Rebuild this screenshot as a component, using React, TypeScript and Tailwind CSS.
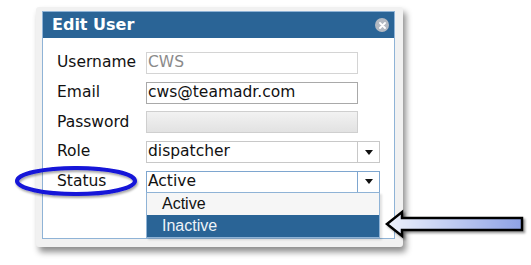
import React from 'react'

const font = { fontFamily: '"DejaVu Sans", Verdana, sans-serif' }

function Caret({ border }: { border: string }) {
  return (
    <div className={`flex h-full w-[22px] items-center justify-center border-l ${border}`}>
      <svg width="8" height="5" viewBox="0 0 8 5">
        <path d="M0 0 L8 0 L4 5 Z" fill="#111" />
      </svg>
    </div>
  )
}

export default function App() {
  const rows = ['Username', 'Email', 'Password', 'Role', 'Status']

  return (
    <div className="relative h-[265px] w-[531px] overflow-hidden bg-white" style={font}>
      {/* window frame */}
      <div className="ml-[36px] mt-[7px] w-[367px] rounded-[3px] bg-[#f1f1f1] pb-[8px] pl-[6px] pr-[8px] pt-[4px] shadow-[3px_5px_6px_rgba(0,0,0,0.45)]">
        <div className="border border-[#8fb3d6] bg-white">
          {/* header */}
          <div className="flex h-[26px] items-center justify-between bg-[#2a6496] pl-[9px] pr-[5px]">
            <span className="text-[16px] font-bold leading-none text-white">Edit User</span>
            <div className="flex h-[14px] w-[14px] items-center justify-center rounded-full bg-[#b3b9c2]">
              <svg width="7" height="7" viewBox="0 0 7 7">
                <path d="M1 1 L6 6 M6 1 L1 6" stroke="white" strokeWidth="1.8" strokeLinecap="round" />
              </svg>
            </div>
          </div>

          {/* form */}
          <div className="flex pb-[45px] pl-[14px] pt-[14px]">
            <div className="flex w-[89px] flex-col gap-[7.7px]">
              {rows.map((r) => (
                <div key={r} className="flex h-[22px] items-center text-[15.5px] leading-none text-[#111]">
                  {r}
                </div>
              ))}
            </div>
            <div className="flex flex-col gap-[7.7px]">
              <div className="flex h-[22px] w-[212px] items-center border border-[#d4d4d4] px-[1px] text-[15.5px] leading-none text-[#8a8a8a]">
                CWS
              </div>
              <div className="flex h-[22px] w-[212px] items-center border border-[#a9a9a9] px-[1px] text-[15.5px] leading-none text-[#111]">
                cws@teamadr.com
              </div>
              <div className="h-[22px] w-[212px] border border-[#cfcfcf] bg-[linear-gradient(#f2f2f2,#e2e2e2)]" />
              <div className="flex h-[22px] w-[234px] items-center border border-[#c8c8c8] text-[15.5px] leading-none text-[#111]">
                <span className="flex-1 pl-[1px]">dispatcher</span>
                <Caret border="border-[#c8c8c8]" />
              </div>
              <div className="relative flex h-[22px] w-[234px] items-center border border-[#7ea6cf] text-[15.5px] leading-none text-[#111]">
                <span className="flex-1 pl-[1px]">Active</span>
                <Caret border="border-[#7ea6cf]" />
                {/* open list */}
                <div
                  className="absolute left-[-1px] top-[20px] z-10 w-[234px] border border-[#8fb3d6] text-[16px] leading-none shadow-[2px_2px_2px_rgba(0,0,0,0.12)]"
                  style={{ fontFamily: '"Liberation Sans", Arial, sans-serif' }}
                >
                  <div className="flex h-[22px] items-center bg-[#f6f6f6] pl-[15px] text-[#111]">Active</div>
                  <div className="flex h-[22px] items-center bg-[#2a6496] pl-[15px] text-[#eef3f8]">Inactive</div>
                </div>
              </div>
            </div>
          </div>
        </div>
      </div>

      {/* annotation: ellipse */}
      <svg className="absolute left-[14px] top-[164px]" width="128" height="36" viewBox="0 0 128 36">
        <defs>
          <filter id="sh" x="-10%" y="-30%" width="120%" height="160%">
            <feDropShadow dx="1" dy="2" stdDeviation="1.2" floodColor="#000" floodOpacity="0.35" />
          </filter>
        </defs>
        <ellipse cx="62" cy="17" rx="59" ry="13" fill="none" stroke="#1212d8" strokeWidth="4" filter="url(#sh)" />
      </svg>

      {/* annotation: arrow */}
      <svg className="absolute left-[383px] top-[207px]" width="146" height="38" viewBox="0 0 146 38">
        <defs>
          <linearGradient id="ag" x1="0" y1="0" x2="1" y2="0">
            <stop offset="0" stopColor="#eef2fb" />
            <stop offset="1" stopColor="#8ea2e6" />
          </linearGradient>
          <filter id="sh2" x="-10%" y="-30%" width="120%" height="160%">
            <feDropShadow dx="2" dy="2" stdDeviation="1.2" floodColor="#000" floodOpacity="0.4" />
          </filter>
        </defs>
        <path
          d="M4 17 L19 5 L19 11 L139 11 L139 23 L19 23 L19 29 Z"
          fill="url(#ag)"
          stroke="#000"
          strokeWidth="2.5"
          strokeLinejoin="miter"
          filter="url(#sh2)"
        />
      </svg>
    </div>
  )
}
